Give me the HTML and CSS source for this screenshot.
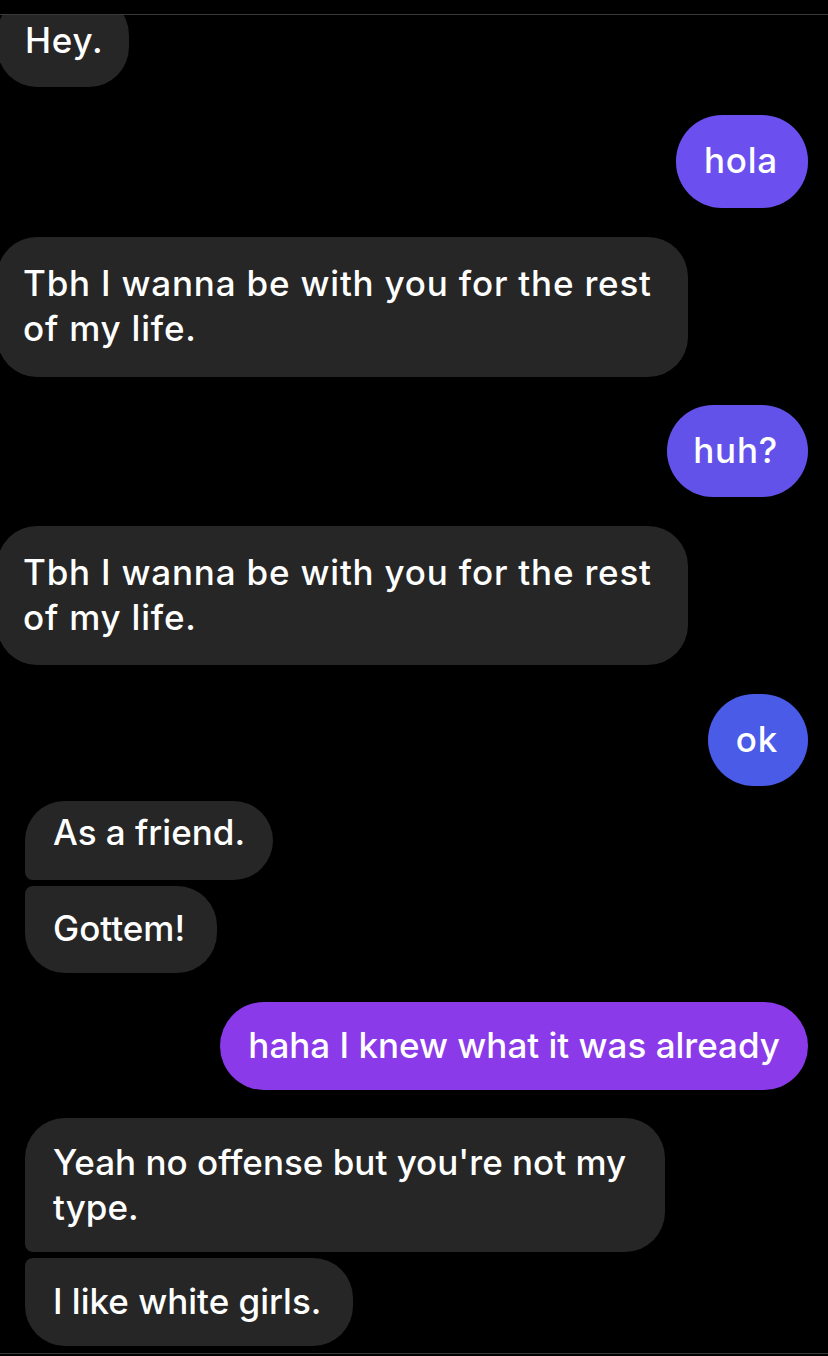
FILE: index.html
```html
<!DOCTYPE html>
<html lang="en">
<head>
<meta charset="utf-8">
<title>Chat</title>
<link rel="stylesheet" href="styles.css">
</head>
<body>
<div class="screen">
  <div class="status-gap"></div>
  <div class="thread">
    <div class="row in edge gap-hey"><div class="bubble big dark solo p-hey">Hey.</div></div>
    <div class="row out g28"><div class="bubble big c-hola p-hola">hola</div></div>
    <div class="row in edge g29"><div class="bubble big dark solo wide p-two">Tbh I wanna be with you for the rest of my life.</div></div>
    <div class="row out g28"><div class="bubble big c-huh p-one p-huh">huh?</div></div>
    <div class="row in edge g29"><div class="bubble big dark solo wide p-two2">Tbh I wanna be with you for the rest of my life.</div></div>
    <div class="row out g29"><div class="bubble big c-ok p-one">ok</div></div>
    <div class="row in inset g15"><div class="bubble dark first p-cut">As a friend.</div></div>
    <div class="row in inset g6"><div class="bubble dark last p-got">Gottem!</div></div>
    <div class="row out g29"><div class="bubble c-haha p-haha">haha I knew what it was already</div></div>
    <div class="row in inset g28"><div class="bubble dark first wide2 p-yeah">Yeah no offense but you're not my type.</div></div>
    <div class="row in inset g6"><div class="bubble dark last p-like">I like white girls.</div></div>
  </div>
</div>
</body>
</html>
```

FILE: styles.css
```css
html, body {
  margin: 0;
  padding: 0;
  background: #000;
}

body {
  font-family: Inter, "Noto Sans", sans-serif;
  -webkit-font-smoothing: antialiased;
}

.screen {
  width: 828px;
  height: 1356px;
  overflow: hidden;
  background: #000;
}

.status-gap {
  height: 14px;
  border-bottom: 1px solid #3a3a3a;
}

.thread {
  height: 1338px;
  overflow: hidden;
  border-bottom: 1px solid #3a3a3a;
  display: flex;
  flex-direction: column;
}

.row {
  display: flex;
  flex: none;
}

.row.out {
  justify-content: flex-end;
  padding-right: 20px;
}

.row.in.edge {
  margin-left: -3px;
}

.row.in.inset {
  padding-left: 25px;
}

.gap-hey { margin-top: -20px; }
.g28 { margin-top: 28px; }
.g29 { margin-top: 29px; }
.g15 { margin-top: 15px; }
.g6 { margin-top: 6px; }

.bubble {
  font-size: 35px;
  line-height: 45px;
  font-weight: 500;
  color: #fff;
  padding: 0 28px;
  border-radius: 46px;
  box-sizing: border-box;
  white-space: normal;
}

.bubble.big {
  letter-spacing: 0.8px;
}

.bubble.dark { background: #262626; }
.bubble.solo { border-radius: 40px; }
.bubble.wide { max-width: 691px; padding-left: 26px; }
.bubble.wide2 { max-width: 640px; padding-right: 24px; }
.bubble.first { border-radius: 40px 40px 40px 8px; }
.bubble.last { border-radius: 8px 40px 40px 40px; }

.c-hola { background: #6b50ef; }
.c-huh { background: #6352ea; }
.c-ok { background: #4a5be8; }
.c-haha { background: #8a3ae9; }

.p-hey { padding-top: 23px; padding-bottom: 24px; padding-left: 28px; padding-right: 26px; }
.p-hola { padding-top: 23px; padding-bottom: 25px; padding-right: 30px; }
.p-one { padding-top: 23px; padding-bottom: 24px; padding-right: 30px; }
.p-huh { padding-left: 26px; }
.p-two { padding-top: 24px; padding-bottom: 26px; }
.p-two2 { padding-top: 24px; padding-bottom: 25px; }
.p-cut { padding-top: 9px; padding-bottom: 25px; border-top-left-radius: 6px; border-top-right-radius: 30px; }
.p-got { padding-top: 20px; padding-bottom: 22px; padding-right: 32px; }
.p-haha { padding-top: 21px; padding-bottom: 22px; }
.p-yeah { padding-top: 22px; padding-bottom: 22px; }
.p-like { padding-top: 21px; padding-bottom: 22px; padding-right: 32px; }
```
